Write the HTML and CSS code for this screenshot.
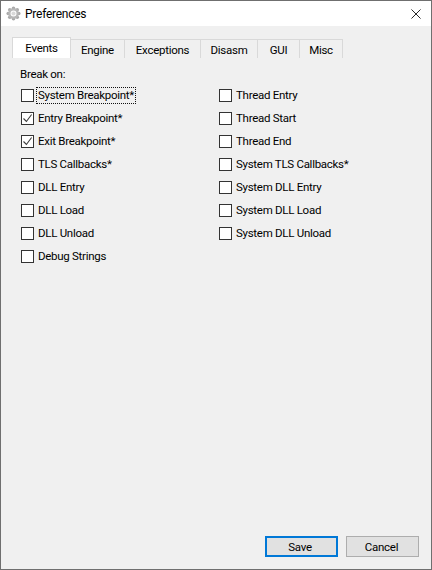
FILE: index.html
```html
<!DOCTYPE html>
<html lang="en">
<head>
<meta charset="utf-8">
<title>Preferences</title>
<link rel="stylesheet" href="styles.css">
</head>
<body>
<div class="window">
  <header class="titlebar">
    <svg class="app-icon" viewBox="0 0 16 16" aria-hidden="true">
      <g fill="#a9a9a9">
        <circle cx="8" cy="2.4" r="1.9"/><circle cx="8" cy="13.6" r="1.9"/>
        <circle cx="2.4" cy="8" r="1.9"/><circle cx="13.6" cy="8" r="1.9"/>
        <circle cx="4" cy="4" r="1.9"/><circle cx="12" cy="4" r="1.9"/>
        <circle cx="4" cy="12" r="1.9"/><circle cx="12" cy="12" r="1.9"/>
      </g>
      <circle cx="8" cy="8" r="4.4" fill="none" stroke="#b8b8b8" stroke-width="2.4"/>
      <circle cx="8" cy="8" r="2.2" fill="#d9d9d9"/>
    </svg>
    <span class="title">Preferences</span>
    <svg class="close" viewBox="0 0 11 11" aria-hidden="true"><path d="M.5.5l10 10M10.5.5l-10 10" stroke="#111" stroke-width="1" fill="none"/></svg>
  </header>
  <main class="content">
    <nav class="tabs">
      <span class="tab active t-events">Events</span>
      <span class="tab t-engine">Engine</span>
      <span class="tab t-exceptions">Exceptions</span>
      <span class="tab t-disasm">Disasm</span>
      <span class="tab t-gui">GUI</span>
      <span class="tab t-misc">Misc</span>
    </nav>
    <section class="panel">
      <div class="legend">Break on:</div>
      <div class="columns">
        <div class="col col-left">
          <div class="row"><span class="box"></span><span class="label focus">System Breakpoint*</span></div>
          <div class="row"><span class="box"><svg viewBox="0 0 11 11"><path d="M1.5 5.5l2.9 3 5.2-7" fill="none" stroke="#3c3c3c" stroke-width="1.1"/></svg></span><span class="label">Entry Breakpoint*</span></div>
          <div class="row"><span class="box"><svg viewBox="0 0 11 11"><path d="M1.5 5.5l2.9 3 5.2-7" fill="none" stroke="#3c3c3c" stroke-width="1.1"/></svg></span><span class="label">Exit Breakpoint*</span></div>
          <div class="row"><span class="box"></span><span class="label">TLS Callbacks*</span></div>
          <div class="row"><span class="box"></span><span class="label">DLL Entry</span></div>
          <div class="row"><span class="box"></span><span class="label">DLL Load</span></div>
          <div class="row"><span class="box"></span><span class="label">DLL Unload</span></div>
          <div class="row"><span class="box"></span><span class="label">Debug Strings</span></div>
        </div>
        <div class="col">
          <div class="row"><span class="box"></span><span class="label">Thread Entry</span></div>
          <div class="row"><span class="box"></span><span class="label">Thread Start</span></div>
          <div class="row"><span class="box"></span><span class="label">Thread End</span></div>
          <div class="row"><span class="box"></span><span class="label">System TLS Callbacks*</span></div>
          <div class="row"><span class="box"></span><span class="label">System DLL Entry</span></div>
          <div class="row"><span class="box"></span><span class="label">System DLL Load</span></div>
          <div class="row"><span class="box"></span><span class="label">System DLL Unload</span></div>
        </div>
      </div>
    </section>
    <footer class="actions">
      <button class="btn primary">Save</button>
      <button class="btn">Cancel</button>
    </footer>
  </main>
</div>
</body>
</html>
```
FILE: styles.css
```css
* { box-sizing: border-box; }
html, body { margin: 0; height: 100%; }
body { font-family: Roboto, "Open Sans", sans-serif; font-size: 11.5px; letter-spacing: -0.28px; color: #000; }
.window { width: 432px; height: 570px; border: 1px solid #6f6f6f; background: #f0f0f0; display: flex; flex-direction: column; }
.titlebar { height: 25px; background: #fff; display: flex; align-items: center; padding: 0 10px 0 5px; flex: none; }
.app-icon { width: 15px; height: 15px; margin-right: 4px; }
.title { font-size: 12px; letter-spacing: -0.25px; flex: 1; }
.close { width: 10px; height: 10px; }
.content { flex: 1; display: flex; flex-direction: column; padding: 11px 12px 12px 11px; }
.tabs { display: flex; align-items: flex-end; height: 21px; flex: none; }
.tab { height: 19px; border: 1px solid #d9d9d9; border-bottom: 0; border-left: 0; display: flex; align-items: center; justify-content: center; background: #f0f0f0; padding-top: 1px; }
.tab.active { height: 21px; background: #fff; border-left: 1px solid #d9d9d9; padding-top: 0; }
.t-events { width: 59px; }
.t-engine { width: 54px; }
.t-exceptions { width: 76px; }
.t-disasm { width: 57px; }
.t-gui { width: 42px; }
.t-misc { width: 43px; }
.panel { flex: 1; padding: 8px 8px 0; }
.legend { height: 18px; line-height: 16px; }
.columns { display: flex; }
.col-left { width: 198px; }
.row { height: 23px; display: flex; align-items: center; }
.box { width: 13px; height: 13px; border: 1px solid #333; background: #fff; margin: 0 3px 0 1px; flex: none; display: flex; }
.box svg { width: 11px; height: 11px; }
.label { line-height: 15px; padding: 0 1px; }
.label.focus { outline: 1px dotted #111; outline-offset: 0; }
.actions { display: flex; justify-content: flex-end; gap: 8px; flex: none; }
.btn { width: 73px; height: 21px; border: 1px solid #adadad; background: #e1e1e1; font: inherit; letter-spacing: inherit; color: #000; padding: 0 2px 0 0; }
.btn.primary { border: 2px solid #0078d7; padding: 0 3px 0 0; }
```
